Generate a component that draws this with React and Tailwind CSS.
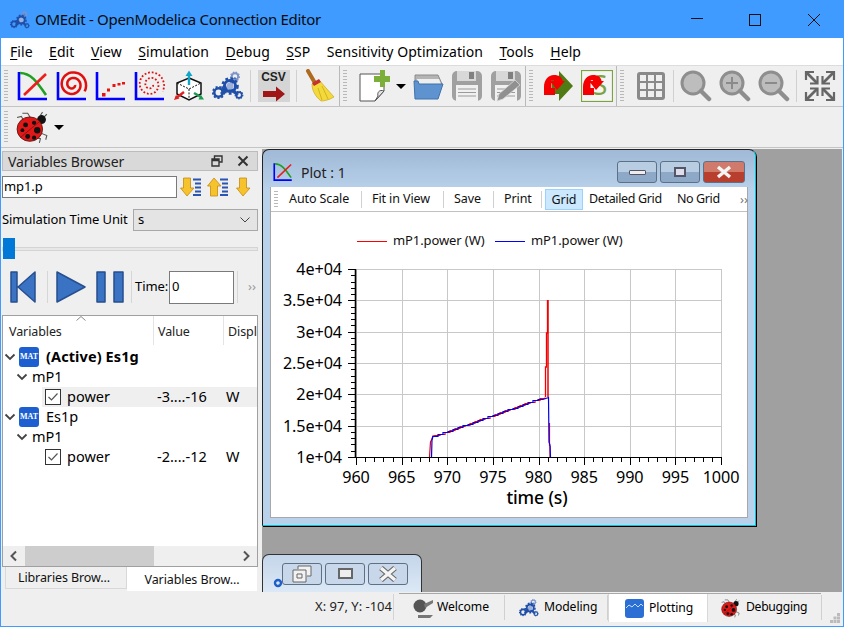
import React from "react";

const F = "font-['Noto_Sans',sans-serif]";

const Gear = ({ x, y, r, c = "#1f4fa8", w }) => (
  <g>
    <circle cx={x} cy={y} r={r} fill="none" stroke={c} strokeWidth={w || r * 0.6} />
    <circle cx={x} cy={y} r={r + r * 0.36} fill="none" stroke={c} strokeWidth={r * 0.42} strokeDasharray={`${r * 0.5} ${r * 0.42}`} />
  </g>
);

const Gears = ({ size = 32 }) => (
  <svg width={size} height={size} viewBox="0 0 32 32">
    <path d="M9 24 L16 17 L24 8 M17 18 L26 25" stroke="#2c5cab" strokeWidth="3" fill="none" />
    <Gear x={6.5} y={22.5} r={4.2} />
    <Gear x={23} y={6.5} r={3.2} c="#7d93c8" />
    <Gear x={18} y={16} r={5.6} c="#1f4fa8" w={3} />
    <circle cx={18} cy={16} r={3.6} fill="#9eb1dc" />
    <Gear x={27} y={25} r={2.8} />
  </svg>
);

const Axes = () => <path d="M2 2 V29 H30" stroke="#0000ff" strokeWidth="2.6" fill="none" />;

const PlotIcon = ({ size = 32 }) => (
  <svg width={size} height={size} viewBox="0 0 32 32">
    <Axes />
    <path d="M3 3 C14 3 20 12 29 25" stroke="#20a020" strokeWidth="2.6" fill="none" />
    <path d="M7 25 L29 4" stroke="#ee1c1c" strokeWidth="2.6" fill="none" />
  </svg>
);

const spiral = (() => {
  const p = [];
  for (let i = 0; i <= 60; i++) {
    const a = (i / 60) * Math.PI * 4.1 + 0.2;
    const r = 2.6 + (i / 60) * 11.4;
    p.push(`${(16.5 + r * Math.cos(a)).toFixed(1)} ${(14.5 + r * Math.sin(a)).toFixed(1)}`);
  }
  return "M" + p.join(" L");
})();

const ParamIcon = () => (
  <svg width="32" height="32" viewBox="0 0 32 32">
    <Axes />
    <path d={spiral} stroke="#e01010" strokeWidth="2.5" fill="none" />
  </svg>
);

const DotsIcon = () => (
  <svg width="32" height="32" viewBox="0 0 32 32">
    <Axes />
    <path d="M7 26.5 H10.5 V23 H7Z M12 21.5 H15 V18.5 H12Z M17.5 17 H20.5 V14 H17.5Z M22.5 15.5 H25.5 V13 H22.5Z M27 14.5 H30 V12 H27Z" fill="#ee1111" />
  </svg>
);

const SpiralDotsIcon = () => (
  <svg width="32" height="32" viewBox="0 0 32 32">
    <Axes />
    <path d={spiral} stroke="#e01010" strokeWidth="1.8" strokeDasharray="1.8 1.9" fill="none" />
  </svg>
);

const CubeIcon = () => (
  <svg width="32" height="32" viewBox="0 0 32 32">
    <path d="M16 8 L28 13 V24 L16 30 L4 24 V13 Z" fill="#fff" stroke="#111" strokeWidth="1.5" />
    <path d="M4 13 L16 19 L28 13 M16 19 V30" fill="none" stroke="#111" strokeWidth="1" strokeDasharray="2 1.4" />
    <path d="M16 15 V5" stroke="#10a6c8" strokeWidth="2.4" />
    <path d="M12.5 6 L16 0.5 L19.5 6Z" fill="#10a6c8" />
    <path d="M11 22 L3 28" stroke="#e02020" strokeWidth="2.4" />
    <path d="M1 30 L3 25 L6.5 28.5Z" fill="#e02020" />
    <path d="M21 23 L28 27" stroke="#1e9a50" strokeWidth="2.4" />
    <path d="M31 29.5 L25.5 29.5 L28 25Z" fill="#1e9a50" />
  </svg>
);

const CsvIcon = () => (
  <div className="relative flex h-[32px] w-[32px] flex-col items-center bg-[#d5d5d5]">
    <span className="font-['Liberation_Sans',sans-serif] text-[12px] leading-[15px] font-bold text-[#222]">CSV</span>
    <svg width="24" height="16" viewBox="0 0 24 16" className="mt-[1px]">
      <path d="M1 5 H14 V0.5 L23 8 L14 15.5 V11 H1Z" fill="#a01515" />
    </svg>
  </div>
);

const BroomIcon = () => (
  <svg width="32" height="34" viewBox="0 0 32 34">
    <path d="M4 2 L11 14" stroke="#b06a20" strokeWidth="4" strokeLinecap="round" />
    <path d="M8 15 L15 11 L30 28 C25 31 20 32 17 32 C12 28 8 22 8 15Z" fill="#f3d93a" stroke="#c9a820" strokeWidth=".7" />
    <path d="M8 14 L15 10 L17 13 L10 17Z" fill="#c53030" />
    <path d="M14 19 L18 31 M18 17 L24 30" stroke="#c9a820" strokeWidth=".8" />
  </svg>
);

const NewIcon = () => (
  <svg width="34" height="34" viewBox="0 0 34 34">
    <path d="M2 5 H26 V22 L17 32 H2Z" fill="#fff" stroke="#555" strokeWidth="1" />
    <path d="M26 22 C21 20 19 24 20 27 L17 32 Z" fill="#e5e5e5" stroke="#555" strokeWidth="1" />
    <path d="M16 7 H22 V1 H27 V7 H32 V13 H27 V18 H22 V13 H16Z" fill="#7cae3a" />
  </svg>
);

const Caret = () => <div className="h-0 w-0 border-x-[5px] border-t-[5px] border-x-transparent border-t-black" />;

const OpenIcon = () => (
  <svg width="32" height="32" viewBox="0 0 32 32">
    <path d="M3 5 H26 L30 14 H3Z" fill="#b4b4b4" stroke="#8a8a8a" />
    <path d="M5 9 H27 L29 14 H5Z" fill="#eee" />
    <path d="M7 14 H31 L26 29 H3 L2 11 H6Z" fill="#5f93cf" stroke="#3f72ae" />
  </svg>
);

const SaveIcon = ({ pencil }) => (
  <svg width="32" height="32" viewBox="0 0 32 32">
    <rect x="1" y="1" width="30" height="30" rx="5" fill="#a0a0a0" />
    <path d="M6 1 H25 V11 H6Z" fill="#d8d8d8" />
    <rect x="18" y="2" width="5" height="7" fill="#808080" />
    <rect x="5" y="15" width="22" height="16" fill="#f0f0f0" />
    <path d="M7 19 H25 M7 22.5 H25 M7 26 H25" stroke="#9a9a9a" />
    {pencil && <path d="M7 31 L9 24 L25 10 L30 15 L13 29Z" fill="#909090" stroke="#d8d8d8" strokeWidth=".8" />}
  </svg>
);

const RedArrow = () => (
  <path d="M2 25 V17 C2 10 6 5 12 5 C17 5 20 7 20.5 11 H23 L15 20 L8 11 H12 C12 9.5 10.5 9.5 9.5 11 V18 H13 V25Z" fill="#f40000" />
);

const TlmIcon = () => (
  <svg width="32" height="32" viewBox="0 0 32 32">
    <path d="M10 8 H17 V1 L31 16 L17 31 V24 H10Z" fill="#507a14" />
    <RedArrow />
  </svg>
);

const SspIcon = () => (
  <svg width="32" height="32" viewBox="0 0 32 32">
    <rect x="0.5" y="0.5" width="31" height="31" fill="#f4f4f4" stroke="#7ba33f" strokeWidth="1.2" />
    <text x="19" y="25" textAnchor="middle" fontSize="27" fill="#7ba33f" className="font-['Noto_Sans',sans-serif]">S</text>
    <RedArrow />
  </svg>
);

const GridIcon = () => (
  <svg width="32" height="32" viewBox="0 0 32 32">
    <rect x="2" y="2" width="28" height="28" rx="3" fill="#8a8a8a" />
    <path d="M5 5 H11 V11 H5Z M13 5 H19 V11 H13Z M21 5 H27 V11 H21Z M5 13 H11 V19 H5Z M13 13 H19 V19 H13Z M21 13 H27 V19 H21Z M5 21 H11 V27 H5Z M13 21 H19 V27 H13Z M21 21 H27 V27 H21Z" fill="#efefef" />
  </svg>
);

const MagIcon = ({ kind }) => (
  <svg width="32" height="32" viewBox="0 0 32 32">
    <circle cx="13" cy="13" r="11" fill="#bdbdbd" stroke="#8e8e8e" strokeWidth="3" />
    <path d="M21 21 L29 29" stroke="#8e8e8e" strokeWidth="4.5" strokeLinecap="round" />
    {kind && <path d="M7 13 H19" stroke="#8a8a8a" strokeWidth="2" />}
    {kind === "plus" && <path d="M13 7 V19" stroke="#8a8a8a" strokeWidth="2" />}
  </svg>
);

const FitIcon = () => (
  <svg width="32" height="32" viewBox="0 0 32 32" fill="none" stroke="#666" strokeWidth="2.8">
    <path d="M2.5 2.5 L13 13 M29.5 2.5 L19 13 M2.5 29.5 L13 19 M29.5 29.5 L19 19" />
    <path d="M13.5 6 V13.5 H6 M18.5 6 V13.5 H26 M13.5 26 V18.5 H6 M18.5 26 V18.5 H26" strokeWidth="2.2" />
    <path d="M2 10 V2 H10 M22 2 H30 V10 M2 22 V30 H10 M22 30 H30 V22" strokeWidth="2.2" />
  </svg>
);

const Bug = ({ size = 34 }) => (
  <svg width={size} height={size} viewBox="0 0 32 32">
    <path d="M6 3 L11 3 L14 8 M1 7 L5 6 L8 11 M24 22 L29 24 L28 28 M19 26 L23 27 L22 31 M25 2 L23 5 M29 4 L26 7" stroke="#555" strokeWidth="1" fill="none" />
    <circle cx="24" cy="9" r="4.2" fill="#111" />
    <ellipse cx="13" cy="18" rx="12" ry="11.5" fill="#e01818" stroke="#5a1010" strokeWidth=".8" />
    <path d="M4 26 L22 11" stroke="#7a1010" strokeWidth=".8" />
    <circle cx="9" cy="14" r="2.3" fill="#111" /><circle cx="17" cy="12" r="2" fill="#111" /><circle cx="20" cy="19" r="3" fill="#111" />
    <circle cx="6" cy="19" r="1.8" fill="#111" /><circle cx="11" cy="25" r="2.3" fill="#111" /><circle cx="17" cy="26" r="2" fill="#111" />
  </svg>
);

const Btn = ({ children }) => <div className="flex h-[40px] w-[39px] shrink-0 items-center justify-center">{children}</div>;
const Sep = ({ h = "h-[32px]", c = "mx-[3px]" }) => <div className={`w-px shrink-0 bg-[#d0d0d0] ${h} ${c}`} />;
const Handle = ({ h = "h-[32px]", c = "mx-[3px]" }) => (
  <div className={`w-[4px] shrink-0 ${h} ${c} bg-[repeating-linear-gradient(to_bottom,#b8b8b8_0,#b8b8b8_1.5px,transparent_1.5px,transparent_3px)]`} />
);
const Split = () => <div className="h-[40px] w-px shrink-0 bg-[#b9b9b9]" />;

const M = ({ u, r, className = "" }) => (
  <span className={className}><u className="decoration-1 underline-offset-2">{u}</u>{r}</span>
);

const MatIcon = () => (
  <div className="flex h-[20px] w-[20px] shrink-0 items-center justify-center rounded-[3px] bg-[#1d5fd0] font-['Liberation_Serif',serif] text-[8px] leading-none font-bold text-white">MAT</div>
);

const Chev = ({ className = "" }) => (
  <svg width="12" height="12" viewBox="0 0 12 12" className={`shrink-0 ${className}`}><path d="M1.5 3.5 L6 8 L10.5 3.5" stroke="#444" strokeWidth="1.8" fill="none" /></svg>
);

const Check = () => (
  <div className="flex h-[16px] w-[16px] shrink-0 items-center justify-center border border-[#333] bg-white">
    <svg width="12" height="10" viewBox="0 0 12 10"><path d="M1.5 5 L4.5 8 L10.5 1.5" stroke="#555" strokeWidth="1.2" fill="none" /></svg>
  </div>
);

const Row = ({ children, className = "" }) => (
  <div className={`flex h-[20px] items-center ${className}`}>{children}</div>
);

const ArrowList = ({ up, list = true }) => (
  <svg width="22" height="20" viewBox="0 0 22 20">
    <path d={up ? "M7 1 L14 9 H10.5 V19 H3.5 V9 H0.5Z" : "M3.5 1 H10.5 V11 H14 L7 19 L0.5 11 H3.5Z"} fill="#f6c32c" stroke="#c78a10" strokeWidth=".8" />
    {list && <path d="M13 2.5 H21 M15 6.5 H21 M15 10.5 H21 M15 14.5 H21 M13 18 H21" stroke="#2a55b0" strokeWidth="2" />}
  </svg>
);

const xs = [960, 965, 970, 975, 980, 985, 990, 995, 1000];
const ys = ["1e+04", "1.5e+04", "2e+04", "2.5e+04", "3e+04", "3.5e+04", "4e+04"];
const X0 = 85, Y0 = 204, DX = 45.625, DY = 31.33;

const ramp = (phase) => {
  let d = "";
  for (let x = 433 + phase; x <= 540; x += 5) {
    const y = Math.round(436 - ((x - 433) * 38) / 107) + 0.5;
    d += ` L${x} ${y} L${x + 5} ${y}`;
  }
  return d;
};

const Chart = () => (
  <svg width="476" height="262" viewBox="0 0 476 262" className="shrink-0">
    <g stroke="#c8c8c8" strokeWidth="1">
      {xs.map((_, i) => <path key={i} d={`M${Math.round(X0 + i * DX) + 0.5} 16 V${Y0}`} />)}
      {ys.map((_, i) => <path key={i} d={`M${X0} ${Math.round(Y0 - i * DY) + 0.5} H${X0 + 8 * DX}`} />)}
    </g>
    <g stroke="#000" strokeWidth="1">
      <path d={`M${X0 - 0.5} 16 V${Y0 + 1}`} strokeWidth="1.6" />
      <path d={`M${X0} ${Y0 + 0.5} H${X0 + 8 * DX + 1}`} strokeWidth="1.2" />
      {ys.map((_, i) => <path key={i} d={`M${X0 - 8} ${Math.round(Y0 - i * DY) + 0.5} H${X0}`} />)}
      {ys.slice(1).map((_, i) => [1, 2, 3, 4].map((k) => <path key={`${i}${k}`} d={`M${X0 - 5} ${Math.round(Y0 - i * DY - (k * DY) / 5) + 0.5} H${X0}`} />))}
      {xs.map((_, i) => <path key={i} d={`M${Math.round(X0 + i * DX) + 0.5} ${Y0} V${Y0 + 8}`} />)}
      {xs.slice(1).map((_, i) => [1, 2, 3, 4].map((k) => <path key={`${i}${k}`} d={`M${Math.round(X0 + i * DX + (k * DX) / 5) + 0.5} ${Y0} V${Y0 + 5}`} />))}
    </g>
    <g className="font-['Noto_Sans',sans-serif]" fontSize="16.2" fill="#000">
      {ys.map((t, i) => <text key={t} x={X0 - 14} y={Y0 - i * DY + 6} textAnchor="end">{t}</text>)}
      {xs.map((t, i) => <text key={t} x={X0 + i * DX} y={Y0 + 26} textAnchor="middle">{t}</text>)}
      <text x={X0 + 181} y={Y0 + 47} textAnchor="middle" fontSize="17.5" fontWeight="500">time (s)</text>
    </g>
    <g transform="translate(-271 -253)" fill="none" strokeWidth="1">
      <path d={`M429.5 457 L430.5 442 L431.5 440 L433 436${ramp(2)} L545 397.5`} stroke="#f00000" strokeWidth="1.2" />
      <path d="M545.5 397 V367 H546.5 V333 H547.5 V300" stroke="#f00000" strokeWidth="1.3" />
      <path d="M548 300 V397" stroke="#f00000" strokeWidth="1.5" />
      <path d="M549.5 423 V446 M550 446 V457" stroke="#f00000" strokeWidth="1.2" />
      <path d={`M431.5 457 L432 440 L433 436${ramp(0)} L548.5 397.5 L549 442 L550 445 L550.5 457`} stroke="#0000f0" strokeWidth="1.2" />
    </g>
  </svg>
);

const WinBtn = ({ children, className = "" }) => (
  <div className={`flex h-[22px] items-center justify-center rounded-[3px] border border-[#5d7086] ${className}`}>{children}</div>
);

const StatusTab = ({ children, active }) => (
  <div className={`flex items-center gap-[4px] text-[12.2px] tracking-[-0.1px] ${active ? "h-[28px] self-start border-x border-[#d8d8d8] bg-white" : "mt-[1px] h-[25px] self-start border-r border-[#d0d0d0]"}`}>{children}</div>
);

const Tb = () => <div className="h-[17px] w-px shrink-0 bg-[#d0d0d0]" />;

export default function App() {
  return (
    <div className={`flex h-[627px] w-[844px] flex-col overflow-hidden border border-[#3f9bff] bg-[#efefef] text-black ${F}`}>
      {/* title */}
      <div className="flex h-[37px] shrink-0 items-center bg-[#3f9bff] pl-[9px]">
        <Gears size={20} />
        <span className="ml-[5px] text-[15px] tracking-[-0.3px] text-[#0a0a0a]">OMEdit - OpenModelica Connection Editor</span>
        <div className="ml-auto flex items-center">
          <svg width="14" height="14" viewBox="0 0 14 14" className="mr-[44px]"><path d="M1 5.5 H13" stroke="#111" /></svg>
          <svg width="14" height="14" viewBox="0 0 14 14" className="mr-[45px]"><rect x="1.5" y="1.5" width="11" height="11" fill="none" stroke="#111" /></svg>
          <svg width="14" height="14" viewBox="0 0 14 14" className="mr-[22px]"><path d="M1 1 L13 13 M13 1 L1 13" stroke="#111" /></svg>
        </div>
      </div>
      {/* menu */}
      <div className="flex h-[27px] shrink-0 items-center gap-[16.5px] bg-white pl-[9px] text-[14px] tracking-[0.05px]">
        <M u="F" r="ile" /><M u="E" r="dit" /><M u="V" r="iew" /><M u="S" r="imulation" /><M u="D" r="ebug" /><M u="S" r="SP" />
        <span>Sensitivity Optimization</span><M u="T" r="ools" /><M u="H" r="elp" />
      </div>
      {/* toolbar 1 */}
      <div className="flex h-[41px] shrink-0 items-center border-t border-[#dcdcdc] pl-[3px]">
        <Handle c="mr-[5px]" />
        <Btn><PlotIcon /></Btn><Btn><ParamIcon /></Btn><Btn><DotsIcon /></Btn><Btn><SpiralDotsIcon /></Btn><Btn><CubeIcon /></Btn><Btn><Gears /></Btn>
        <Sep c="ml-[3px] mr-[3px]" /><Btn><CsvIcon /></Btn><Sep c="mx-[3px]" /><Btn><BroomIcon /></Btn>
        <Split />
        <Handle c="ml-[3px] mr-[8px]" />
        <Btn><NewIcon /></Btn>
        <div className="flex w-[14px] justify-center"><Caret /></div>
        <Btn><OpenIcon /></Btn><Btn><SaveIcon /></Btn><Btn><SaveIcon pencil /></Btn>
        <Split />
        <Handle c="ml-[3px] mr-[5px]" />
        <Btn><TlmIcon /></Btn><Btn><SspIcon /></Btn>
        <Split />
        <Handle c="ml-[3px] mr-[7px]" />
        <Btn><GridIcon /></Btn>
        <Sep c="ml-[3px] mr-[2px]" />
        <Btn><MagIcon /></Btn><Btn><MagIcon kind="plus" /></Btn><Btn><MagIcon kind="minus" /></Btn>
        <Sep c="mx-[3px]" />
        <Btn><FitIcon /></Btn>
      </div>
      {/* toolbar 2 */}
      <div className="flex h-[42px] shrink-0 items-center border-y border-[#c4c4c4] pl-[3px]">
        <Handle c="mr-[5px]" />
        <Btn><Bug /></Btn>
        <div className="ml-[2px]"><Caret /></div>
      </div>
      {/* main */}
      <div className="flex min-h-0 flex-1">
        {/* dock */}
        <div className="ml-px flex w-[256px] shrink-0 flex-col text-[13px] tracking-[-0.1px]">
          <div className="mt-[3px] flex h-[20px] shrink-0 items-center border border-[#bcbcbc] bg-[#d9d9d9] pl-[5px] text-[#222]">
            <span className="text-[14px]">Variables Browser</span>
            <svg width="12" height="12" viewBox="0 0 12 12" className="ml-auto mr-[14px]"><path d="M3.5 3.5 V1 H11 V7 H8.5 M1 4 H8 V11 H1Z M1 5.5 H8" fill="none" stroke="#333" strokeWidth="1.4" /></svg>
            <svg width="12" height="12" viewBox="0 0 12 12" className="mr-[8px]"><path d="M1.5 1.5 L10.5 10.5 M10.5 1.5 L1.5 10.5" stroke="#333" strokeWidth="2" /></svg>
          </div>
          <div className="mt-[5px] flex h-[22px] shrink-0 items-center">
            <div className="flex h-[22px] w-[175px] items-center border border-[#7a7a7a] bg-white pl-[1px]">mp1.p</div>
            <div className="ml-[3px]"><ArrowList /></div>
            <div className="ml-[5px]"><ArrowList up /></div>
            <div className="ml-[7px]"><ArrowList list={false} /></div>
          </div>
          <div className="mt-[11px] flex h-[22px] shrink-0 items-center justify-between">
            <span>Simulation Time Unit</span>
            <div className="flex h-[22px] w-[125px] items-center justify-between border border-[#a8a8a8] bg-[#e4e4e4] pl-[4px] pr-[7px]">
              <span>s</span>
              <svg width="10" height="6" viewBox="0 0 10 6"><path d="M0.5 0.5 L5 5 L9.5 0.5" fill="none" stroke="#444" /></svg>
            </div>
          </div>
          <div className="relative mt-[7px] flex h-[22px] shrink-0 items-center">
            <div className="h-[4px] w-full border border-[#d4d4d4] bg-[#e7e7e7]" />
            <div className="absolute left-px top-0 h-[21px] w-[12px] bg-[#0078d7]" />
          </div>
          <div className="mt-[10px] flex h-[34px] shrink-0 items-center">
            <svg width="28" height="32" viewBox="0 0 28 32" className="ml-[8px]"><path d="M1 1 H7 V31 H1Z M25 1 V31 L8 16Z" fill="#3b73c4" stroke="#264f8f" strokeWidth="1.5" strokeLinejoin="round" /></svg>
            <div className="ml-[9px] h-[32px] w-px bg-[#d6d6d6]" />
            <svg width="30" height="32" viewBox="0 0 30 32" className="ml-[8px]"><path d="M1 1 L29 16 L1 31Z" fill="#3b73c4" stroke="#264f8f" strokeWidth="1.5" strokeLinejoin="round" /></svg>
            <svg width="28" height="32" viewBox="0 0 28 32" className="ml-[10px]"><path d="M1 1 H9 V31 H1Z M18 1 H27 V31 H18Z" fill="#3b73c4" stroke="#264f8f" strokeWidth="1.5" strokeLinejoin="round" /></svg>
            <div className="ml-[7px] h-[32px] w-px bg-[#d6d6d6]" />
            <span className="ml-[3px]">Time:</span>
            <div className="ml-[1px] flex h-[33px] w-[65px] items-center border border-[#7a7a7a] bg-white pl-[2px]">0</div>
            <div className="ml-[3px] h-[32px] w-px bg-[#d6d6d6]" />
            <span className="ml-[10px] text-[13px] text-[#999]">››</span>
          </div>
          <div className="relative mt-[11px] flex h-[252px] shrink-0 flex-col overflow-hidden border border-[#a0a0a0] bg-white">
            <svg width="10" height="5" viewBox="0 0 10 5" className="absolute left-[73px] top-0"><path d="M0.5 4.5 L5 0.5 L9.5 4.5" fill="none" stroke="#888" /></svg>
            <div className="relative flex h-[31px] shrink-0 items-end pb-[5px] pl-[6px] text-[12.5px] text-[#222]">
              <span>Variables</span>
              <span className="absolute left-[155px]">Value</span>
              <span className="absolute left-[225px]">Displa</span>
              <div className="absolute left-[150px] top-0 h-[29px] w-px bg-[#e4e4e4]" />
              <div className="absolute left-[220px] top-0 h-[29px] w-px bg-[#e4e4e4]" />
            </div>
            <div className="relative h-[199px] text-[14.5px] tracking-normal">
              <Row className="gap-[3px] pl-px"><Chev /><MatIcon /><span className="ml-[4px] font-bold tracking-[0.1px]">(Active) Es1g</span></Row>
              <Row className="gap-[4px] pl-[13px]"><Chev /><span>mP1</span></Row>
              <div className="relative ml-[39px] flex h-[20px] items-center gap-[6px] bg-[#efefef] pl-[3px]">
                <Check /><span>power</span>
                <span className="absolute left-[115px]">-3....-16</span><span className="absolute left-[184px]">W</span>
              </div>
              <Row className="gap-[3px] pl-px"><Chev /><MatIcon /><span className="ml-[4px]">Es1p</span></Row>
              <Row className="gap-[4px] pl-[13px]"><Chev /><span>mP1</span></Row>
              <div className="relative ml-[39px] flex h-[20px] items-center gap-[6px] pl-[3px]">
                <Check /><span>power</span>
                <span className="absolute left-[115px]">-2....-12</span><span className="absolute left-[184px]">W</span>
              </div>
            </div>
            <div className="flex h-[20px] shrink-0 items-center bg-[#efefef]">
              <svg width="22" height="12" viewBox="0 0 22 12"><path d="M13 1.5 L8.5 6 L13 10.5" fill="none" stroke="#555" strokeWidth="2" /></svg>
              <div className="h-full w-[129px] bg-[#cdcdcd]" />
              <svg width="12" height="12" viewBox="0 0 12 12" className="ml-auto mr-[5px]"><path d="M4 1.5 L8.5 6 L4 10.5" fill="none" stroke="#555" strokeWidth="2" /></svg>
            </div>
          </div>
          <div className="flex h-[24px] shrink-0 items-start text-[12.5px] text-[#111]">
            <div className="ml-[3px] flex h-[22px] w-[122px] items-center justify-center border border-t-0 border-[#d8d8d8] pr-[4px] pt-[2px]">Libraries Brow...</div>
            <div className="flex h-[24px] w-[130px] items-center justify-center bg-white pt-[3px]">Variables Brow...</div>
          </div>
        </div>
        {/* mdi */}
        <div className="relative mb-[1px] ml-[4px] mr-px mt-px min-w-0 flex-1 bg-[#a0a0a0]">
          {/* plot window */}
          <div className="absolute left-0 top-0 flex h-[377px] w-[494px] flex-col rounded-t-[7px] border border-[#222] border-b-[#00c8d8] border-r-[#00c8d8] bg-[#b8d0e9] bg-[linear-gradient(to_bottom,#9fb9d6_0,#b9d1ea_40px)] pb-[7px] pl-[7px] pr-[7px] shadow-[1px_1px_0_#000]">
            <div className="flex h-[37px] shrink-0 items-center pt-[7px]">
              <div className="ml-[3px]"><PlotIcon size={20} /></div>
              <span className="ml-[8px] text-[14px] text-[#222]">Plot : 1</span>
              <div className="ml-auto flex gap-[3px]">
                <WinBtn className="w-[40px] bg-[linear-gradient(to_bottom,#b9cde2_50%,#8ea9c8_50%)]"><div className="h-[5px] w-[17px] rounded-[1px] border border-[#556] bg-[#eee]" /></WinBtn>
                <WinBtn className="w-[40px] bg-[linear-gradient(to_bottom,#b9cde2_50%,#8ea9c8_50%)]"><div className="h-[10px] w-[12px] border-2 border-[#556] bg-[#dde]" /></WinBtn>
                <WinBtn className="mr-[3px] w-[42px] bg-[linear-gradient(to_bottom,#cf7a6a_50%,#b83f2e_50%)]">
                  <svg width="18" height="14" viewBox="0 0 18 14"><path d="M3 2 L15 12 M15 2 L3 12" stroke="#f4f4f4" strokeWidth="3.4" /></svg>
                </WinBtn>
              </div>
            </div>
            <div className="flex min-h-0 flex-1 flex-col border border-t-0 border-[#a8a8a8] bg-white text-[12.5px] tracking-[-0.1px] text-[#111]">
              <div className="flex h-[25px] shrink-0 items-center border-b border-[#c0c0c0] bg-white pt-[1px]">
                <Handle h="h-[17px]" c="ml-[3px] mr-0" />
                <span className="ml-[11px] w-[72px] shrink-0">Auto Scale</span>
                <Tb />
                <span className="ml-[10px] w-[71px] shrink-0">Fit in View</span>
                <Tb />
                <span className="ml-[10px] w-[39px] shrink-0">Save</span>
                <Tb />
                <span className="ml-[10px] w-[37px] shrink-0">Print</span>
                <Tb />
                <div className="ml-[3px] flex h-[21px] w-[38px] shrink-0 items-center justify-center border border-[#99d1ff] bg-[#cce8ff] pt-[2px]">Grid</div>
                <span className="ml-[6px] w-[88px] shrink-0 tracking-[-0.35px]">Detailed Grid</span>
                <span className="w-[63px] shrink-0 tracking-[-0.4px]">No Grid</span>
                <span className="text-[13px] text-[#777]">››</span>
              </div>
              <div className="flex h-[41px] shrink-0 items-center pt-[17px] text-[13px]">
                <div className="ml-[86px] h-[1px] w-[30px] shrink-0 bg-[#ff0000]" />
                <span className="ml-[6px] w-[102px] shrink-0">mP1.power (W)</span>
                <div className="h-[1px] w-[30px] shrink-0 bg-[#0000ff]" />
                <span className="ml-[6px]">mP1.power (W)</span>
              </div>
              <Chart />
            </div>
          </div>
          {/* minimized */}
          <div className="absolute bottom-0 left-0 flex h-[38px] w-[160px] items-center rounded-t-[7px] border border-b-0 border-[#333] bg-[linear-gradient(to_bottom,#c4d6ea,#dce8f5)] pl-[19px]">
            <div className="absolute bottom-[4px] left-[10px]"><svg width="10" height="10" viewBox="0 0 10 10"><circle cx="5" cy="5" r="3" fill="none" stroke="#1f5fc8" strokeWidth="2.4" /></svg></div>
            <div className="flex gap-[3px]">
              <WinBtn className="w-[40px] bg-[#c8d8ea]">
                <svg width="20" height="18" viewBox="0 0 20 18"><path d="M6 4 V1 H19 V11 H15 M1 5 H14 V17 H1Z M5 9 H10 V13 H5Z" fill="#f2f2f2" stroke="#666" /></svg>
              </WinBtn>
              <WinBtn className="w-[40px] bg-[#c8d8ea]"><div className="h-[11px] w-[15px] border-2 border-[#666] bg-[#eee]" /></WinBtn>
              <WinBtn className="w-[40px] bg-[#c8d8ea]">
                <svg width="22" height="16" viewBox="0 0 22 16"><path d="M4 2 L18 14 M18 2 L4 14" stroke="#666" strokeWidth="5.5" /><path d="M4 2 L18 14 M18 2 L4 14" stroke="#f4f4f4" strokeWidth="3.5" /></svg>
              </WinBtn>
            </div>
          </div>
        </div>
      </div>
      {/* status */}
      <div className="flex h-[33px] shrink-0 items-start">
        <div className="flex h-[28px] w-[392px] shrink-0 items-center justify-end pr-[1px] text-[13px] text-[#222]">X: 97, Y: -104</div>
        <div className="mt-[1px] h-[26px] w-px shrink-0 bg-[#d4d4d4]" />
        <div className="ml-[5px] flex h-[29px] w-[422px] shrink-0 items-start border-t border-[#a8a8a8]">
          <StatusTab><div className="flex w-[105px] items-center gap-[3px] pl-[13px]">
            <svg width="22" height="22" viewBox="0 0 22 22"><circle cx="8" cy="9" r="6.5" fill="#555" /><path d="M6 18 H21 L18 21 H6Z M12 7 L21 3 L21 6 L13 11Z" fill="#777" /></svg>
            <span>Welcome</span></div></StatusTab>
          <StatusTab><div className="flex w-[102px] items-center gap-[5px] pl-[14px]"><Gears size={20} /><span>Modeling</span></div></StatusTab>
          <StatusTab active><div className="flex w-[98px] items-center gap-[5px] pl-[16px]">
            <svg width="19" height="19" viewBox="0 0 19 19"><rect width="19" height="19" rx="3" fill="#2b6fd4" /><path d="M1 9 L4 6 L7 8 L10 5 L13 8 L16 5 L18 7" fill="none" stroke="#bfe0ff" /></svg>
            <span>Plotting</span></div></StatusTab>
          <StatusTab><div className="flex w-[113px] items-center gap-[5px] pl-[13px]"><Bug size={20} /><span className="tracking-[-0.3px]">Debugging</span></div></StatusTab>
        </div>
        <div className="ml-[9px] mt-[20px]">
          <svg width="10" height="10" viewBox="0 0 10 10"><path d="M7 0 H10 V3 H7Z M3.5 3.5 H6.5 V6.5 H3.5Z M7 3.5 H10 V6.5 H7Z M0 7 H3 V10 H0Z M3.5 7 H6.5 V10 H3.5Z M7 7 H10 V10 H7Z" fill="#bbb" /></svg>
        </div>
      </div>
    </div>
  );
}
